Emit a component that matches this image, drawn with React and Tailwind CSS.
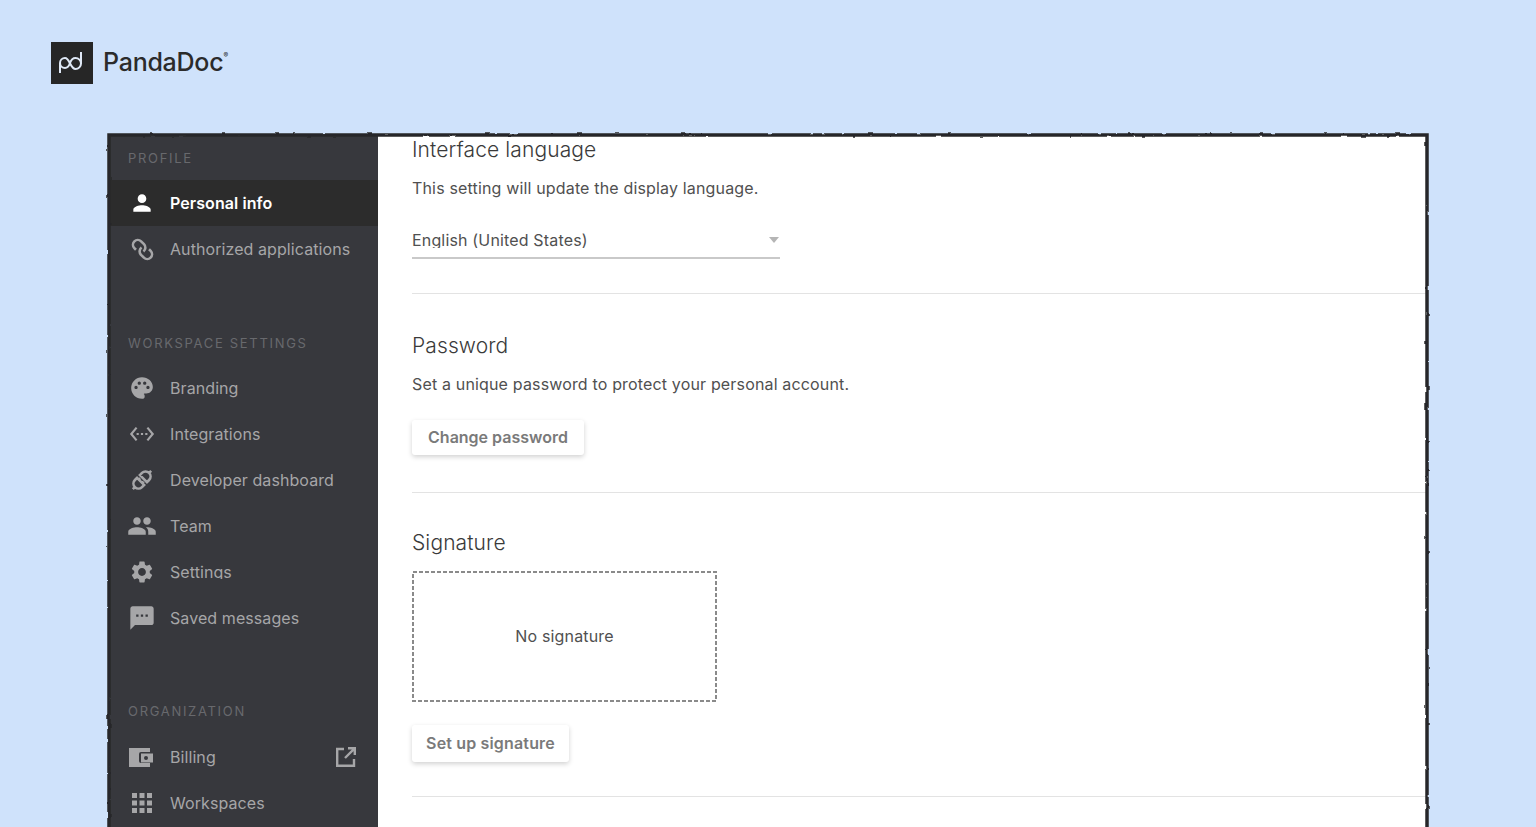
import { MdPerson, MdPalette, MdSettingsEthernet, MdPeople, MdSettings, MdSms, MdApps } from "react-icons/md";

const font = { fontFamily: '"Inter", "Liberation Sans", sans-serif' };

const WalletIcon = () => (
  <svg viewBox="0 0 26 20" className="w-[26px] h-[20px]" fill="currentColor">
    <path d="M0 1h21v4H12a2 2 0 0 0-2 2v7a2 2 0 0 0 2 2h9v4H0z" />
    <path fillRule="evenodd" d="M12 6.500h12v9H12zM17 9a2 2 0 1 0 0 4 2 2 0 0 0 0-4z" />
  </svg>
);

const ExternalIcon = () => (
  <svg viewBox="0 0 20 20" className="w-5 h-5" fill="none" stroke="currentColor" strokeWidth="2.400">
    <path d="M8 2H1.200v16.800h16.800V12" />
    <path d="M12 1.200h6.800V8M18.400 1.600 9 11" />
  </svg>
);

const LinkIcon = () => (
  <svg viewBox="0 0 24 24" className="w-[23px] h-[23px]" fill="none" stroke="currentColor" strokeWidth="2.700">
    <g transform="rotate(90 12 12)">
      <path d="M10 13a5 5 0 0 0 7.540.540l3-3a5 5 0 0 0-7.070-7.070l-1.720 1.710" />
      <path d="M14 11a5 5 0 0 0-7.540-.540l-3 3a5 5 0 0 0 7.070 7.070l1.710-1.710" />
    </g>
  </svg>
);

const PlugIcon = () => (
  <svg viewBox="-2 -2 28 28" className="w-[28px] h-[28px]" fill="none" stroke="currentColor" strokeWidth="2.600">
    <g transform="rotate(45 12 12)">
      <path d="M7 10V7a5 5 0 0 1 10 0v3zM12 2v-3" />
      <path d="M7 14h10v3a5 5 0 0 1-10 0zM12 22v3M9.500 14v-2M14.500 14v-2" />
    </g>
  </svg>
);

const SectionLabel = ({ children, className = "" }) => (
  <div className={`pl-5 text-[13px] leading-5 tracking-[0.13em] text-[#68696d] ${className}`}>{children}</div>
);

const NavItem = ({ icon, label, active, right, clip }) => (
  <div className={`h-[46px] flex items-center pl-5 pr-[22px] ${active ? "bg-[#2c2c2c] text-white font-semibold" : "text-[#a6a6a8]"}`}>
    <span className="w-[28px] flex justify-center shrink-0 text-[#a6a6a8]">
      <span className={active ? "text-white" : ""}>{icon}</span>
    </span>
    <span className={`ml-[14px] text-[16px] tracking-[0.005em] ${clip ? "self-start mt-[11px] h-[19px] leading-6 overflow-hidden" : ""}`}>{label}</span>
    {right && <span className="ml-auto flex text-[#a6a6a8]">{right}</span>}
  </div>
);

const Button = ({ children, className = "" }) => (
  <div className={`flex items-center justify-center pb-[2px] bg-white rounded-[3px] text-[16px] font-semibold text-[#7a7a7a] shadow-[0_2px_5px_rgba(0,0,0,0.18)] ${className}`}>
    {children}
  </div>
);

const Heading = ({ children, className = "" }) => (
  <h2 className={`text-[21px] leading-7 font-light tracking-[0.005em] text-[#3a3a3a] ${className}`}>{children}</h2>
);

const Hr = ({ className = "" }) => <div className={`h-px bg-[#e3e3e3] ${className}`} />;

export default function App() {
  return (
    <div className="h-[827px] overflow-hidden bg-[#cfe2fb]" style={font}>
      {/* logo */}
      <div className="h-[134px] pl-[51px] pt-[42px]">
        <div className="flex items-center">
          <svg viewBox="0 0 42 42" className="w-[42px] h-[42px]" fill="none" stroke="#dfe8f5" strokeWidth="2">
            <rect width="42" height="42" fill="#262626" stroke="none" />
            <path d="M9 31V21a5 5 0 0 1 5-5c5 0 5 11 10.500 11a5.500 5.500 0 0 0 5.500-5.500V10" />
            <path d="M9 21a5 5 0 0 0 5 5c3 0 4-2 5-5s3-5 5.500-5a5.500 5.500 0 0 1 5.500 5.500" />
          </svg>
          <div className="ml-[10px] text-[25px] font-medium tracking-[-0.01em] text-[#2b2b2b]">
            PandaDoc<sup className="text-[7px] top-[-13px]">®</sup>
          </div>
        </div>
      </div>

      {/* window */}
      <div className="relative ml-[108px] w-[1320px] h-[693px] flex bg-white">
        <aside className="w-[270px] h-full shrink-0 bg-[#37383d] pt-[14px] overflow-hidden">
          <SectionLabel>PROFILE</SectionLabel>
          <div className="mt-[12px]">
            <NavItem active icon={<MdPerson size={26} />} label="Personal info" />
            <NavItem icon={<LinkIcon />} label="Authorized applications" />
          </div>
          <SectionLabel className="mt-[61px]">WORKSPACE SETTINGS</SectionLabel>
          <div className="mt-[12px]">
            <NavItem icon={<MdPalette size={26} />} label="Branding" />
            <NavItem icon={<MdSettingsEthernet size={26} />} label="Integrations" />
            <NavItem icon={<PlugIcon />} label="Developer dashboard" />
            <NavItem icon={<MdPeople size={30} />} label="Team" />
            <NavItem icon={<MdSettings size={26} />} label="Settings" clip />
            <NavItem icon={<MdSms size={28} />} label="Saved messages" />
          </div>
          <SectionLabel className="mt-[60px]">ORGANIZATION</SectionLabel>
          <div className="mt-[13px]">
            <NavItem icon={<WalletIcon />} label="Billing" right={<ExternalIcon />} />
            <NavItem icon={<MdApps size={30} />} label="Workspaces" />
          </div>
        </aside>

        <main className="flex-1 pl-[34px] overflow-hidden">
          <Heading className="mt-[2px]">Interface language</Heading>
          <p className="mt-[12px] text-[16px] leading-6 tracking-[0.01em] text-[#505050]">This setting will update the display language.</p>
          <div className="mt-[18px] w-[368px] h-[41px] border-b-2 border-[#c9c9c9] flex items-start justify-between pr-[1px] pt-[10px] text-[16px] text-[#505050] tracking-[0.01em]">
            <span className="h-[20px] leading-6 overflow-hidden">English (United States)</span>
            <span className="mt-[9px] w-0 h-0 border-x-[5.500px] border-x-transparent border-t-[6px] border-t-[#b5b5b5]" />
          </div>
          <Hr className="mt-[34px]" />

          <Heading className="mt-[38px]">Password</Heading>
          <p className="mt-[12px] text-[16px] leading-6 tracking-[0.01em] text-[#505050]">Set a unique password to protect your personal account.</p>
          <Button className="mt-[24px] w-[172px] h-[35px]">Change password</Button>
          <Hr className="mt-[37px]" />

          <Heading className="mt-[36px]">Signature</Heading>
          <div className="relative mt-[14px] w-[305px] h-[131px] pb-[2px] flex items-center justify-center text-[16px] text-[#505050] tracking-[0.01em]">
            <svg className="absolute inset-0 w-full h-full" fill="none" stroke="#8a8a8a" strokeWidth="2" strokeDasharray="4 2">
              <rect x="1" y="1" width="303" height="129" />
            </svg>
            No signature
          </div>
          <Button className="mt-[23px] w-[157px] h-[37px] tracking-[0.01em]">Set up signature</Button>
          <Hr className="mt-[34px]" />
        </main>

        {/* hand drawn frame over the window */}
        <svg className="absolute left-[-4px] top-[-4px] w-[1328px] h-[720px] pointer-events-none" viewBox="0 0 1328 720" fill="none">
          <defs>
            <filter id="rough" x="-2%" y="-2%" width="104%" height="104%">
              <feTurbulence type="fractalNoise" baseFrequency="0.11" numOctaves="2" seed="7" />
              <feDisplacementMap in="SourceGraphic" scale="2.200" xChannelSelector="R" yChannelSelector="G" />
            </filter>
          </defs>
          <rect x="5" y="5" width="1318" height="760" stroke="#27272a" strokeWidth="3.500" filter="url(#rough)" />
        </svg>
      </div>
    </div>
  );
}
